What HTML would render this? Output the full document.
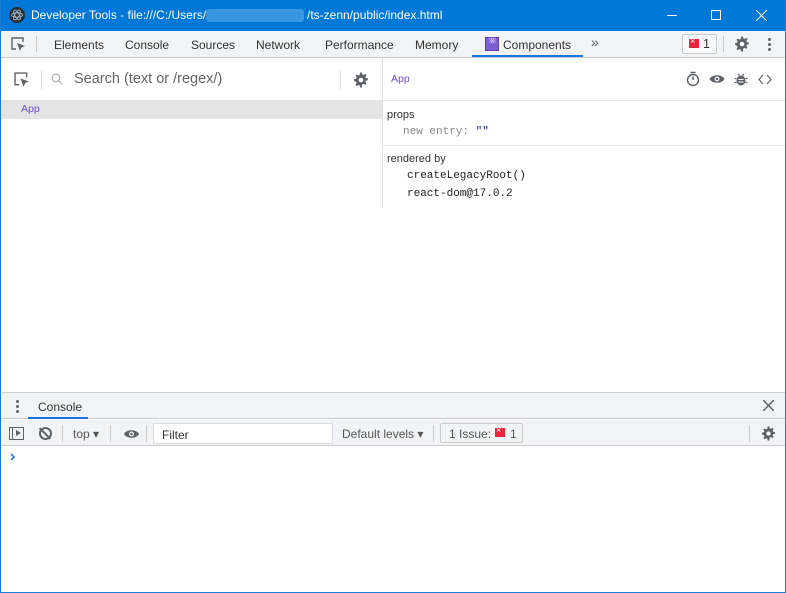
<!DOCTYPE html>
<html><head><meta charset="utf-8"><style>
*{box-sizing:border-box;margin:0;padding:0}
body{width:786px;height:593px;overflow:hidden;font-family:"Liberation Sans",Arial,sans-serif;font-size:12px;color:#333;background:#fff;position:relative}
.win{position:absolute;left:0;top:0;width:786px;height:593px;border:1px solid #1a7fd8;border-top:none}
.title{position:absolute;left:0;top:0;width:786px;height:31px;background:#0078d7;color:#fff;font-size:12px}
.abs{position:absolute}
.tabs{position:absolute;left:1px;top:31px;width:784px;height:27px;background:#f1f3f4;border-bottom:1px solid #cbcdd1}
.tab{position:absolute;top:7px;font-size:12px;color:#333}
.mono{font-family:"Liberation Mono",monospace;font-size:11px}
</style></head><body>
<svg width="0" height="0" style="position:absolute"><defs><g id="gear"><path fill="#5f6368" d="M8 0.5h2l.4 2.2 1.5.7 1.9-1.3 1.4 1.4-1.3 1.9.7 1.5 2.2.4v2l-2.2.4-.7 1.5 1.3 1.9-1.4 1.4-1.9-1.3-1.5.7L10 17.5H8l-.4-2.2-1.5-.7-1.9 1.3-1.4-1.4 1.3-1.9-.7-1.5L1.2 10V8l2.2-.4.7-1.5-1.3-1.9 1.4-1.4 1.9 1.3 1.5-.7z"/><circle cx="9" cy="9" r="2.6" fill="#fff"/></g></defs></svg>
<div class="title">
 <div class="abs" style="left:9px;top:7px;width:16px;height:16px;border-radius:50%;background:#2b2e33"></div>
 <svg class="abs" style="left:10px;top:8px" width="14" height="14" viewBox="0 0 14 14"><g fill="none" stroke="#9fb5c8" stroke-width="0.9"><ellipse cx="7" cy="7" rx="5.5" ry="2.2"/><ellipse cx="7" cy="7" rx="5.5" ry="2.2" transform="rotate(60 7 7)"/><ellipse cx="7" cy="7" rx="5.5" ry="2.2" transform="rotate(-60 7 7)"/></g></svg>
 <div class="abs" style="left:31px;top:8px">Developer Tools - file:///C:/Users/</div>
 <div class="abs" style="left:206px;top:9px;width:98px;height:13px;background:rgba(255,255,255,.22);border-radius:3px"></div>
 <div class="abs" style="left:307px;top:8px">/ts-zenn/public/index.html</div>
 <div class="abs" style="left:667px;top:15px;width:10px;height:1px;background:#fff"></div>
 <div class="abs" style="left:711px;top:10px;width:10px;height:10px;border:1px solid #fff"></div>
 <svg class="abs" style="left:756px;top:10px" width="11" height="11"><path d="M0 0L11 11M11 0L0 11" stroke="#fff" stroke-width="1.1"/></svg>
</div>
<div class="tabs">
 <svg class="abs" style="left:10px;top:6px" width="15" height="15" viewBox="0 0 15 15"><path d="M5 12H1V1h11v4" fill="none" stroke="#5f6368" stroke-width="1.4"/><path d="M6 6l8 3-3.5 1.2L9 14z" fill="#5f6368"/></svg>
 <div class="abs" style="left:35px;top:5px;width:1px;height:16px;background:#ccc"></div>
 <div class="tab" style="left:53px">Elements</div>
 <div class="tab" style="left:124px">Console</div>
 <div class="tab" style="left:190px">Sources</div>
 <div class="tab" style="left:255px">Network</div>
 <div class="tab" style="left:324px">Performance</div>
 <div class="tab" style="left:414px">Memory</div>
 <div class="abs" style="left:484px;top:6px;width:14px;height:14px;background:#7b5ed6;border:1px solid #5a44a8"></div>
 <div class="abs" style="left:487px;top:5px;color:#fff;font-size:10px">⚛</div>
 <div class="tab" style="left:502px">Components</div>
 <div class="abs" style="left:471px;top:24px;width:111px;height:2px;background:#1a73e8"></div>
 <div class="tab" style="left:590px;font-size:14px;top:3px;color:#555">»</div>
 <div class="abs" style="left:681px;top:3px;width:35px;height:20px;border:1px solid #ccc;border-radius:2px;background:#f8f9fa"></div>
 <div class="abs" style="left:688px;top:8px;width:10px;height:9px;background:#e8253b"></div>
 <div class="abs" style="left:689px;top:5px;color:#fff;font-size:9px">×</div>
 <div class="abs" style="left:702px;top:6px;font-size:12.5px">1</div>
 <div class="abs" style="left:722px;top:5px;width:1px;height:16px;background:#ccc"></div>
 <svg class="abs" style="left:733px;top:5px" width="16" height="16" viewBox="0 0 18 18"><use href="#gear"/></svg>
 <div class="abs" style="left:767px;top:7px;width:3px;height:3px;border-radius:50%;background:#5f6368;box-shadow:0 5px 0 #5f6368,0 10px 0 #5f6368"></div>
</div>
<!-- left panel -->
<svg class="abs" style="left:14px;top:72px" width="16" height="16" viewBox="0 0 15 15"><path d="M5 12H1V1h11v4" fill="none" stroke="#5f6368" stroke-width="1.3"/><path d="M6 6l8 3-3.5 1.2L9 14z" fill="#5f6368"/></svg>
<div class="abs" style="left:41px;top:70px;width:1px;height:20px;background:#ddd"></div>
<svg class="abs" style="left:51px;top:73px" width="12" height="12"><circle cx="5" cy="5" r="3.8" fill="none" stroke="#aaa" stroke-width="1.1"/><path d="M8 8l3 3" stroke="#aaa" stroke-width="1.2"/></svg>
<div class="abs" style="left:74px;top:71px;font-size:14.5px;color:#666">Search (text or /regex/)</div>
<div class="abs" style="left:340px;top:70px;width:1px;height:20px;background:#ddd"></div>
<svg class="abs" style="left:353px;top:72px" width="16" height="16" viewBox="0 0 18 18"><use href="#gear"/></svg>
<div class="abs" style="left:1px;top:100px;width:381px;height:1px;background:#e6e6e6"></div>
<div class="abs" style="left:1px;top:101px;width:381px;height:18px;background:#e4e4e4"></div>
<div class="abs" style="left:21px;top:103px;font-size:10.5px;color:#6c4dc6">App</div>
<div class="abs" style="left:382px;top:58px;width:1px;height:150px;background:#e0e0e0"></div>
<!-- right panel -->
<div class="abs" style="left:391px;top:73px;font-size:10.5px;color:#6c4dc6">App</div>
<svg class="abs" style="left:685px;top:71px" width="16" height="16" viewBox="0 0 16 16"><circle cx="8" cy="9" r="5.5" fill="none" stroke="#5f6368" stroke-width="1.5"/><path d="M5.5 1.5h5M8 9V5.5" stroke="#5f6368" stroke-width="1.5"/></svg>
<svg class="abs" style="left:709px;top:73px" width="16" height="12" viewBox="0 0 16 12"><path d="M0.5 6C3 1 13 1 15.5 6 13 11 3 11 0.5 6z" fill="#5f6368"/><circle cx="8" cy="6" r="2.5" fill="#fff"/><circle cx="8" cy="6" r="1.3" fill="#5f6368"/></svg>
<svg class="abs" style="left:734px;top:71px" width="14" height="16" viewBox="0 0 14 16"><path d="M4 3l1.5 1.5M10 3L8.5 4.5" stroke="#5f6368" stroke-width="1.3"/><ellipse cx="7" cy="9.5" rx="4.5" ry="5" fill="#5f6368"/><path d="M0.5 7.5h2M11.5 7.5h2M0.5 11.5h2M11.5 11.5h2" stroke="#5f6368" stroke-width="1.3"/><path d="M4.5 8.5h5M4.5 11h5" stroke="#fff" stroke-width="1"/></svg>
<svg class="abs" style="left:758px;top:74px" width="14" height="11"><path d="M5 1L1 5.5 5 10M9 1l4 4.5L9 10" fill="none" stroke="#5f6368" stroke-width="1.2"/></svg>
<div class="abs" style="left:383px;top:100px;width:402px;height:1px;background:#e6e6e6"></div>
<div class="abs" style="left:387px;top:109px;font-size:11px;color:#333">props</div>
<div class="abs mono" style="left:403px;top:126px;color:#888">new entry: <span style="color:#1a1aa6">""</span></div>
<div class="abs" style="left:383px;top:145px;width:402px;height:1px;background:#e6e6e6"></div>
<div class="abs" style="left:387px;top:153px;font-size:11px;color:#333">rendered by</div>
<div class="abs mono" style="left:407px;top:170px;color:#222">createLegacyRoot()</div>
<div class="abs mono" style="left:407px;top:188px;color:#222">react-dom@17.0.2</div>
<!-- drawer -->
<div class="abs" style="left:1px;top:392px;width:784px;height:1px;background:#cbcdd1"></div>
<div class="abs" style="left:1px;top:393px;width:784px;height:26px;background:#f1f3f4;border-bottom:1px solid #cbcdd1"></div>
<div class="abs" style="left:16px;top:400px;width:3px;height:3px;border-radius:50%;background:#5f6368;box-shadow:0 5px 0 #5f6368,0 10px 0 #5f6368"></div>
<div class="abs" style="left:38px;top:400px;font-size:12px">Console</div>
<div class="abs" style="left:28px;top:417px;width:60px;height:2px;background:#1a73e8"></div>
<svg class="abs" style="left:763px;top:400px" width="11" height="11"><path d="M0 0L11 11M11 0L0 11" stroke="#5f6368" stroke-width="1.5"/></svg>
<div class="abs" style="left:1px;top:420px;width:784px;height:26px;background:#f1f3f4;border-bottom:1px solid #cbcdd1"></div>
<div class="abs" style="left:9px;top:427px;width:15px;height:13px;border:1px solid #5f6368"></div>
<div class="abs" style="left:12px;top:427px;width:1px;height:13px;background:#5f6368"></div>
<div class="abs" style="left:16px;top:430px;border-left:5px solid #5f6368;border-top:3.5px solid transparent;border-bottom:3.5px solid transparent"></div>
<div class="abs" style="left:39px;top:427px;width:13px;height:13px;border:2px solid #5f6368;border-radius:50%"></div>
<div class="abs" style="left:44px;top:426px;width:2px;height:15px;background:#5f6368;transform:rotate(-45deg)"></div>
<div class="abs" style="left:62px;top:425px;width:1px;height:17px;background:#ccc"></div>
<div class="abs" style="left:73px;top:427px;color:#555">top ▾</div>
<div class="abs" style="left:110px;top:425px;width:1px;height:17px;background:#ccc"></div>
<svg class="abs" style="left:123px;top:428px" width="17" height="12" viewBox="0 0 16 12"><path d="M0.5 6C3 1 13 1 15.5 6 13 11 3 11 0.5 6z" fill="#5f6368"/><circle cx="8" cy="6" r="2.5" fill="#fff"/><circle cx="8" cy="6" r="1.3" fill="#5f6368"/></svg>
<div class="abs" style="left:146px;top:425px;width:1px;height:17px;background:#ccc"></div>
<div class="abs" style="left:153px;top:423px;width:180px;height:21px;background:#fff;border:1px solid #dadce0"></div>
<div class="abs" style="left:162px;top:428px;color:#333">Filter</div>
<div class="abs" style="left:342px;top:427px;color:#555">Default levels ▾</div>
<div class="abs" style="left:433px;top:425px;width:1px;height:17px;background:#ccc"></div>
<div class="abs" style="left:440px;top:423px;width:83px;height:20px;border:1px solid #ccc;border-radius:2px"></div>
<div class="abs" style="left:449px;top:427px;color:#555">1 Issue:</div>
<div class="abs" style="left:495px;top:428px;width:10px;height:9px;background:#e8253b"></div>
<div class="abs" style="left:496px;top:425px;color:#fff;font-size:9px">×</div>
<div class="abs" style="left:510px;top:427px;color:#555">1</div>
<div class="abs" style="left:749px;top:425px;width:1px;height:17px;background:#ccc"></div>
<svg class="abs" style="left:761px;top:426px" width="15" height="15" viewBox="0 0 18 18"><use href="#gear"/></svg>
<svg class="abs" style="left:10px;top:453px" width="6" height="8"><path d="M1 1l3 3-3 3" fill="none" stroke="#1a73e8" stroke-width="1.5"/></svg>
<div class="win"></div>
</body></html>
